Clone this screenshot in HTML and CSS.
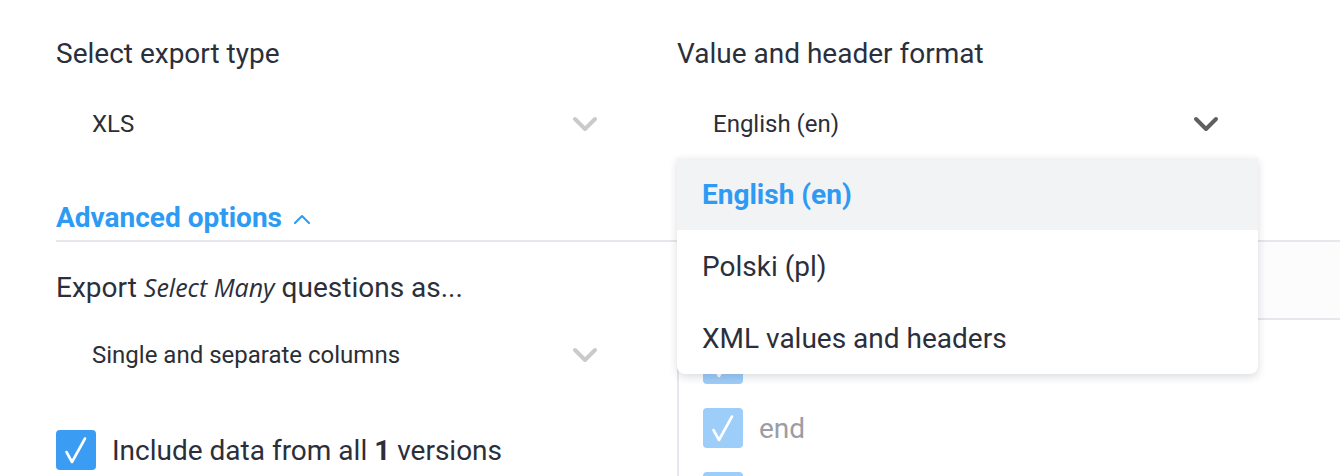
FILE: index.html
```html
<!DOCTYPE html>
<html lang="en">
<head>
<meta charset="utf-8">
<title>Export settings</title>
<link rel="stylesheet" href="styles.css">
</head>
<body>
<div class="page">
  <div class="top-row">
    <div class="field">
      <div class="label">Select export type</div>
      <div class="select">
        <span>XLS</span>
        <svg class="chev chev-light" viewBox="0 0 26 16" width="26" height="16"><path d="M3 3 L13 13 L23 3"/></svg>
      </div>
    </div>
    <div class="field">
      <div class="label">Value and header format</div>
      <div class="select-wrap">
        <div class="select">
          <span>English (en)</span>
          <svg class="chev chev-dark" viewBox="0 0 26 16" width="26" height="16"><path d="M3 3 L13 13 L23 3"/></svg>
        </div>
        <ul class="menu">
          <li class="active">English (en)</li>
          <li>Polski (pl)</li>
          <li>XML values and headers</li>
        </ul>
      </div>
    </div>
  </div>

  <div class="adv-toggle">
    <span>Advanced options</span>
    <svg class="caret" viewBox="0 0 18 10" width="18" height="10"><path d="M2 9 L9 2 L16 9"/></svg>
  </div>

  <div class="adv">
    <div class="adv-left">
      <div class="label label-adv">Export <em>Select Many</em> questions as...</div>
      <div class="select">
        <span>Single and separate columns</span>
        <svg class="chev chev-light" viewBox="0 0 26 16" width="26" height="16"><path d="M3 3 L13 13 L23 3"/></svg>
      </div>
      <div class="check-row">
        <span class="box"><svg viewBox="0 0 40 40" width="40" height="40"><path d="M10.5 22 L16 32 L29 8.5"/></svg></span>
        <span>Include data from all <b>1</b> versions</span>
      </div>
    </div>
    <div class="adv-right">
      <div class="panel-head"></div>
      <ul class="qlist">
        <li><span class="box box-dim"><svg viewBox="0 0 40 40" width="40" height="40"><path d="M10.5 22 L16 32 L29 8.5"/></svg></span><span>start</span></li>
        <li><span class="box box-dim"><svg viewBox="0 0 40 40" width="40" height="40"><path d="M10.5 22 L16 32 L29 8.5"/></svg></span><span>end</span></li>
        <li><span class="box box-dim"><svg viewBox="0 0 40 40" width="40" height="40"><path d="M10.5 22 L16 32 L29 8.5"/></svg></span><span>today</span></li>
      </ul>
    </div>
  </div>
</div>
</body>
</html>
```

FILE: styles.css
```css
* { box-sizing: border-box; }

html, body {
  margin: 0;
  background: #ffffff;
}

body {
  font-family: Roboto, "Noto Sans", "Liberation Sans", sans-serif;
  color: #2b2f3c;
  overflow: hidden;
}

.page {
  width: 1340px;
  padding: 36px 0 0 56px;
}

.top-row {
  display: grid;
  grid-template-columns: 581px 581px;
  column-gap: 40px;
}

.label {
  font-size: 28px;
  line-height: 36px;
  margin-bottom: 18px;
  color: #2b2f3c;
  white-space: nowrap;
}

.label em {
  font-family: "Open Sans", "Noto Sans", sans-serif;
  font-style: italic;
  font-size: 25px;
}

.select {
  height: 68px;
  display: flex;
  align-items: center;
  justify-content: space-between;
  padding: 0 39px 0 36px;
  font-size: 24px;
  color: #2c2e36;
}

.chev {
  display: block;
  fill: none;
  stroke-width: 4;
  stroke-linecap: round;
  stroke-linejoin: round;
}

.chev-light { stroke: #cacaca; }
.chev-dark { stroke: #5f5f5f; }

.select-wrap {
  position: relative;
}

.menu {
  position: absolute;
  top: 100%;
  left: 0;
  right: 0;
  margin: 0;
  padding: 0;
  list-style: none;
  background: #ffffff;
  border-radius: 0 0 8px 8px;
  box-shadow: 0 3px 9px rgba(30, 35, 55, 0.16);
  overflow: hidden;
  z-index: 5;
}

.menu li {
  height: 72px;
  display: flex;
  align-items: center;
  padding-left: 25px;
  font-size: 28px;
  color: #2b2f3c;
}

.menu li.active {
  background: #f2f3f5;
  color: #2d9af3;
  font-weight: 700;
}

.adv-toggle {
  margin-top: 42px;
  padding-bottom: 4px;
  border-bottom: 2px solid #e6e7ec;
  display: flex;
  align-items: center;
  gap: 11px;
  font-size: 28px;
  line-height: 36px;
  font-weight: 700;
  color: #2d9af3;
}

.caret {
  display: block;
  fill: none;
  stroke: #2d9af3;
  stroke-width: 2;
  stroke-linecap: round;
  stroke-linejoin: round;
  margin-top: 2px;
}

.adv {
  display: grid;
  grid-template-columns: 581px 1fr;
  column-gap: 40px;
}

.adv-left {
  padding-top: 27px;
}

.label-adv {
  margin-bottom: 15px;
}

.check-row {
  margin-top: 41px;
  display: flex;
  align-items: center;
  gap: 16px;
  font-size: 28px;
  color: #2b2f3c;
  white-space: nowrap;
}

.check-row b {
  font-weight: 700;
}

.box {
  width: 40px;
  height: 40px;
  flex: none;
  border-radius: 4px;
  background: #3a9cf2;
  display: block;
}

.box svg {
  display: block;
  fill: none;
  stroke: #ffffff;
  stroke-width: 2.6;
  stroke-linecap: round;
  stroke-linejoin: round;
}

.box-dim {
  background: #9dcdf9;
}

.adv-right {
  border-left: 2px solid #e6e7ec;
}

.panel-head {
  height: 78px;
  background: #fcfcfd;
  border-bottom: 2px solid #e6e7ec;
}

.qlist {
  list-style: none;
  margin: 0;
  padding: 12px 0 0 24px;
}

.qlist li {
  height: 64px;
  display: flex;
  align-items: center;
  gap: 16px;
  font-size: 28px;
  color: #9b9da6;
}
```
